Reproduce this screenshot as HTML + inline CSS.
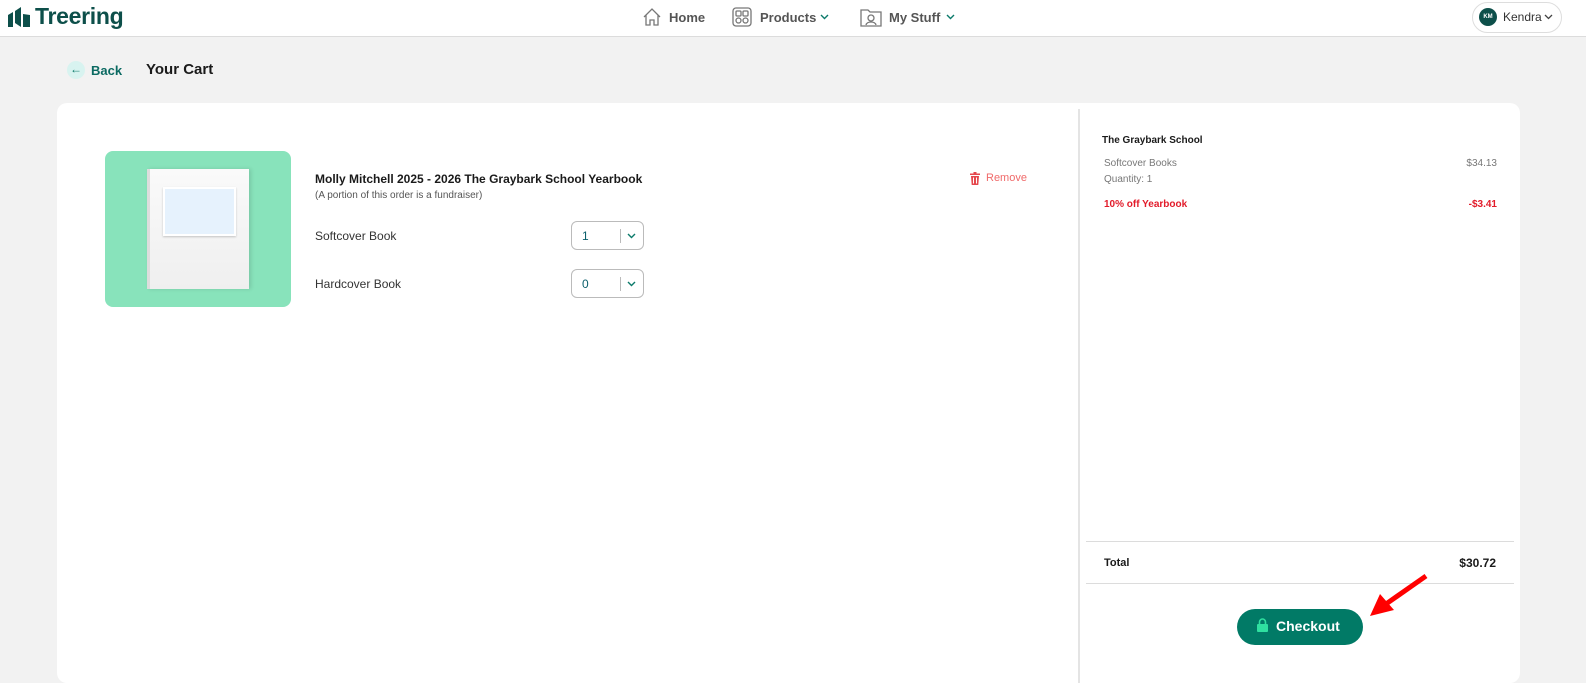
<!DOCTYPE html>
<html><head><meta charset="utf-8"><style>
*{box-sizing:border-box;margin:0;padding:0}
body{width:1586px;height:671px;overflow:hidden;background:#f2f2f2;font-family:"Liberation Sans",sans-serif;position:relative;color:#1a1a1a}
.hdr{position:absolute;left:0;top:0;width:1586px;height:37px;background:#fff;border-bottom:1px solid #dcdcdc}
.abs{position:absolute}
.nav{font-size:13px;font-weight:bold;color:#555}
.card{position:absolute;left:57px;top:103px;width:1463px;height:580px;background:#fff;border-radius:10px}
.sel{position:absolute;left:571px;width:73px;height:29px;border:1px solid #bbb;border-radius:6px;font-size:12px;color:#0b5f6b}
</style></head><body>
<div class="hdr">
  <svg class="abs" style="left:8px;top:7px" width="22" height="20" viewBox="0 0 22 20"><path d="M0 8 L5 5 V20 H0Z M7 4 L13 0 V20 L7 16Z M15 7 L22 8 V20 H15Z" fill="#0d4f4a"/></svg>
  <div class="abs" style="left:35px;top:3px;font-size:23px;font-weight:bold;color:#0d4f4a;letter-spacing:-0.3px">Treering</div>
  <svg class="abs" style="left:642px;top:7px" width="20" height="20" viewBox="0 0 20 20" fill="none" stroke="#777" stroke-width="1.3"><path d="M2 10 L10 2 L18 10 M4 8 V18 H8 V13 H12 V18 H16 V8"/></svg>
  <div class="abs nav" style="left:669px;top:10px">Home</div>
  <svg class="abs" style="left:732px;top:7px" width="20" height="20" viewBox="0 0 20 20" fill="none" stroke="#777" stroke-width="1.3"><rect x="1" y="1" width="18" height="18" rx="3"/><rect x="4" y="4" width="5" height="5" rx="1"/><rect x="11" y="4" width="5" height="5" rx="1"/><circle cx="6.5" cy="13.5" r="2.5"/><circle cx="13.5" cy="13.5" r="2.5"/></svg>
  <div class="abs nav" style="left:760px;top:10px">Products</div>
  <svg class="abs" style="left:820px;top:14px" width="9" height="6" viewBox="0 0 9 6"><path d="M1 1 L4.5 4.5 L8 1" fill="none" stroke="#0b7a6a" stroke-width="1.4"/></svg>
  <svg class="abs" style="left:860px;top:7px" width="22" height="20" viewBox="0 0 22 20" fill="none" stroke="#777" stroke-width="1.3"><path d="M1 3 H8 L10 5 H21 V19 H1Z"/><circle cx="11" cy="11" r="3"/><path d="M6 18 C7 14 15 14 16 18"/></svg>
  <div class="abs nav" style="left:889px;top:10px">My Stuff</div>
  <svg class="abs" style="left:946px;top:14px" width="9" height="6" viewBox="0 0 9 6"><path d="M1 1 L4.5 4.5 L8 1" fill="none" stroke="#0b7a6a" stroke-width="1.4"/></svg>
  <div class="abs" style="left:1472px;top:2px;width:90px;height:31px;border:1px solid #ddd;border-radius:16px"></div>
  <div class="abs" style="left:1479px;top:8px;width:18px;height:18px;border-radius:50%;background:#0d4f4a;color:#fff;font-size:6px;font-weight:bold;text-align:center;line-height:18px">KM</div>
  <div class="abs" style="left:1503px;top:10px;font-size:12px;color:#333">Kendra</div>
  <svg class="abs" style="left:1544px;top:14px" width="9" height="6" viewBox="0 0 9 6"><path d="M1 1 L4.5 4.5 L8 1" fill="none" stroke="#444" stroke-width="1.3"/></svg>
</div>
<div class="abs" style="left:67px;top:61px;width:18px;height:18px;border-radius:50%;background:#d8f3f0;color:#0b7a6a;font-size:12px;text-align:center;line-height:17px">&#8592;</div>
<div class="abs" style="left:91px;top:63px;font-size:13px;font-weight:bold;color:#0b6a62">Back</div>
<div class="abs" style="left:146px;top:61px;font-size:15px;font-weight:bold">Your Cart</div>
<div class="card">
  <div class="abs" style="left:48px;top:48px;width:186px;height:156px;background:#88e3bb;border-radius:8px"></div>
  <div class="abs" style="left:90px;top:66px;width:102px;height:120px;background:linear-gradient(#fafafa,#efefef);border-left:3px solid #ddd;box-shadow:2px 0 4px rgba(0,0,0,.12)"></div>
  <div class="abs" style="left:106px;top:84px;width:73px;height:49px;background:#e6f2fd;border:2px solid #fff;box-shadow:0 1px 2px rgba(0,0,0,.2)"></div>
  <div class="abs" style="left:258px;top:69px;font-size:12px;font-weight:bold">Molly Mitchell 2025 - 2026 The Graybark School Yearbook</div>
  <div class="abs" style="left:258px;top:87px;font-size:10px;color:#555">(A portion of this order is a fundraiser)</div>
  <div class="abs" style="left:258px;top:126px;font-size:12px;color:#333">Softcover Book</div>
  <div class="abs" style="left:258px;top:174px;font-size:12px;color:#333">Hardcover Book</div>
  <div class="sel" style="left:514px;top:118px"><span class="abs" style="left:10px;top:7px">1</span><span class="abs" style="left:48px;top:7px;width:1px;height:14px;background:#bbb"></span><svg class="abs" style="left:55px;top:11px" width="9" height="6" viewBox="0 0 9 6"><path d="M1 1 L4.5 4.5 L8 1" fill="none" stroke="#0b7a6a" stroke-width="1.4"/></svg></div>
  <div class="sel" style="left:514px;top:166px"><span class="abs" style="left:10px;top:7px">0</span><span class="abs" style="left:48px;top:7px;width:1px;height:14px;background:#bbb"></span><svg class="abs" style="left:55px;top:11px" width="9" height="6" viewBox="0 0 9 6"><path d="M1 1 L4.5 4.5 L8 1" fill="none" stroke="#0b7a6a" stroke-width="1.4"/></svg></div>
  <svg class="abs" style="left:913px;top:69px" width="10" height="13" viewBox="0 0 10 13" fill="#e5484d"><rect x="0" y="1.5" width="10" height="1.5"/><rect x="3.5" y="0" width="3" height="1.5"/><path d="M1 4 H9 L8.3 13 H1.7Z M3 5.5 V11.5 H4 V5.5Z M6 5.5 V11.5 H7 V5.5Z" fill-rule="evenodd"/></svg>
  <div class="abs" style="left:929px;top:69px;font-size:11px;color:#f06a6a">Remove</div>
  <div class="abs" style="left:1021px;top:6px;width:2px;height:574px;background:#e4e4e4"></div>
  <div class="abs" style="left:1045px;top:32px;font-size:10px;font-weight:bold">The Graybark School</div>
  <div class="abs" style="left:1047px;top:55px;font-size:10px;color:#777">Softcover Books</div>
  <div class="abs" style="left:1047px;top:71px;font-size:10px;color:#777">Quantity: 1</div>
  <div class="abs" style="right:23px;top:55px;font-size:10px;color:#777">$34.13</div>
  <div class="abs" style="left:1047px;top:96px;font-size:10px;font-weight:bold;color:#e21b2a">10% off Yearbook</div>
  <div class="abs" style="right:23px;top:96px;font-size:10px;font-weight:bold;color:#e21b2a">-$3.41</div>
  <div class="abs" style="left:1029px;top:438px;width:428px;height:1px;background:#dcdcdc"></div>
  <div class="abs" style="left:1047px;top:454px;font-size:11px;font-weight:bold">Total</div>
  <div class="abs" style="right:24px;top:453px;font-size:12px;font-weight:bold">$30.72</div>
  <div class="abs" style="left:1029px;top:480px;width:428px;height:1px;background:#dcdcdc"></div>
  <div class="abs" style="left:1180px;top:506px;width:126px;height:36px;border-radius:18px;background:#017a66"></div>
  <svg class="abs" style="left:1200px;top:515px" width="11" height="14" viewBox="0 0 11 14"><path d="M2.5 6 V4 A3 3 0 0 1 8.5 4 V6" fill="none" stroke="#2fe0a0" stroke-width="1.6"/><rect x="0" y="6" width="11" height="8" rx="1" fill="#2fe0a0"/></svg>
  <div class="abs" style="left:1219px;top:515px;font-size:14px;font-weight:bold;color:#fff">Checkout</div>
</div>
<svg class="abs" style="left:1366px;top:572px" width="66" height="48" viewBox="0 0 66 48"><path d="M60 4 L20 32" stroke="#f00" stroke-width="5"/><path d="M4 44 L14 22 L28 38Z" fill="#f00"/></svg>
</body></html>
